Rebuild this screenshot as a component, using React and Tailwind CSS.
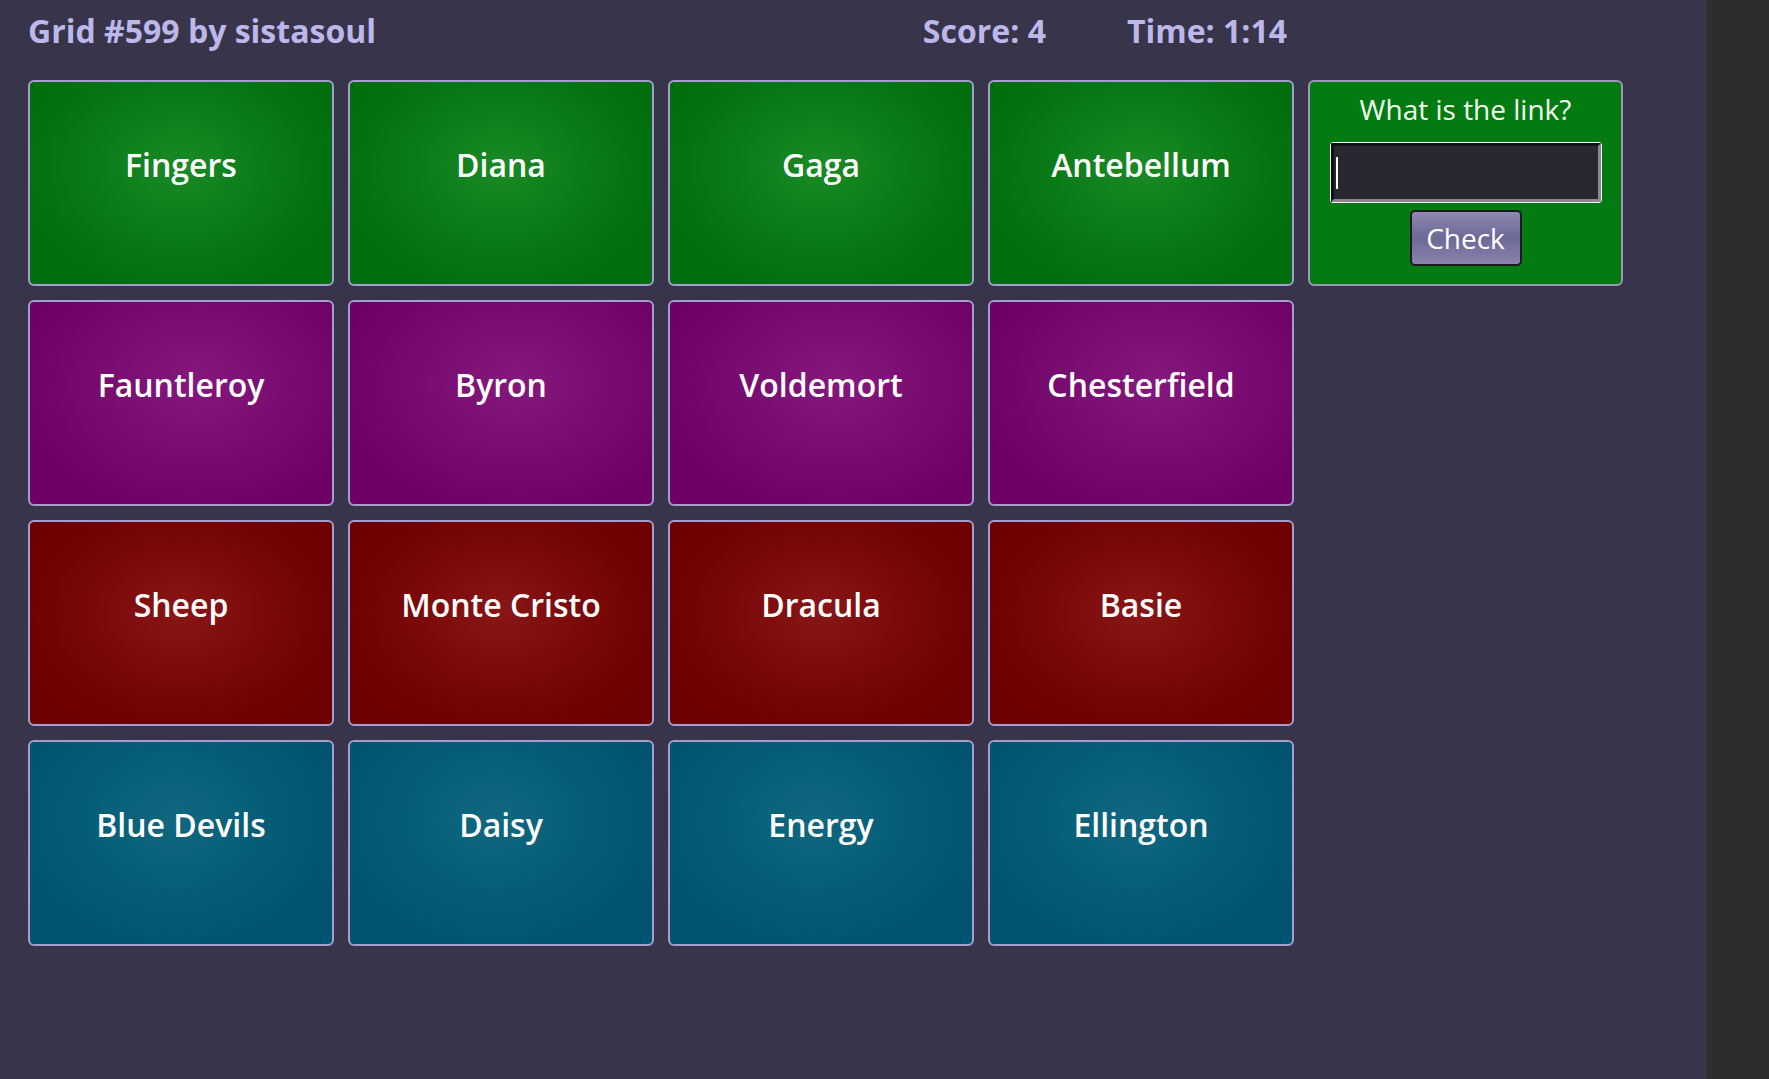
const rows = [
  {
    color: "green",
    words: ["Fingers", "Diana", "Gaga", "Antebellum"],
  },
  {
    color: "purple",
    words: ["Fauntleroy", "Byron", "Voldemort", "Chesterfield"],
  },
  {
    color: "red",
    words: ["Sheep", "Monte Cristo", "Dracula", "Basie"],
  },
  {
    color: "blue",
    words: ["Blue Devils", "Daisy", "Energy", "Ellington"],
  },
];

const tileColors = {
  green:
    "bg-[radial-gradient(ellipse_at_50%_42%,#1a8a26_0%,#0b7a19_40%,#006d0f_80%)]",
  purple:
    "bg-[radial-gradient(ellipse_at_55%_40%,#85187c_0%,#780c70_40%,#6c0065_80%)]",
  red: "bg-[radial-gradient(ellipse_at_50%_45%,#881616_0%,#7b0909_40%,#6e0000_80%)]",
  blue: "bg-[radial-gradient(ellipse_at_48%_38%,#10677f_0%,#065d77_40%,#00546d_80%)]",
};

function Tile({ word, color }) {
  return (
    <div
      className={`h-[206px] w-[306px] rounded-[6px] border-2 border-[#a59dcf] pt-[59px] text-center text-[32px] leading-[48px] font-semibold text-white ${tileColors[color]}`}
    >
      {word}
    </div>
  );
}

function LinkPanel() {
  return (
    <div className="flex h-[206px] w-[315px] flex-col items-center rounded-[6px] border-2 border-[#9c98b8] bg-[#037b12] pt-[7px]">
      <p className="text-[28px] leading-[40px] text-[#f4fff0]">
        What is the link?
      </p>
      <div className="relative mt-[13px] rounded-[3px] border border-white">
        <input
          type="text"
          aria-label="Link"
          className="block h-[59px] w-[270px] border-[3px] border-t-[#111015] border-l-[#111015] border-r-[#8a8a8e] border-b-[#8a8a8e] bg-[#292730] px-2 text-[24px] text-white outline-none"
        />
        <span className="pointer-events-none absolute left-[5px] top-[14px] h-[32px] w-[2px] bg-white" />
      </div>
      <button
        type="button"
        className="mt-[7px] h-[56px] w-[112px] rounded-[5px] border-2 border-[#1b1a20] bg-[linear-gradient(to_bottom,#8d88b1_0%,#6d6997_50%,#8984ad_100%)] text-[28px] leading-none text-white"
      >
        Check
      </button>
    </div>
  );
}

export default function App() {
  return (
    <div className="flex min-h-screen bg-[#38354a] font-['Open_Sans',sans-serif]">
      <main className="flex-1 pl-[28px] pt-[11px]">
        <header className="flex w-[1266px] items-baseline pr-[7px] text-[32px] leading-[40px] font-bold text-[#bcb8ec]">
          <h1>Grid #599 by sistasoul</h1>
          <div className="ml-auto flex gap-[81px]">
            <span>Score: 4</span>
            <span>Time: 1:14</span>
          </div>
        </header>

        <div className="mt-[29px] flex items-start gap-[14px]">
          <div className="grid grid-cols-[repeat(4,306px)] gap-[14px]">
            {rows.map((row) =>
              row.words.map((word) => (
                <Tile key={word} word={word} color={row.color} />
              ))
            )}
          </div>
          <LinkPanel />
        </div>
      </main>
      <div className="w-[62px] bg-[#2d2d2d]" />
    </div>
  );
}
